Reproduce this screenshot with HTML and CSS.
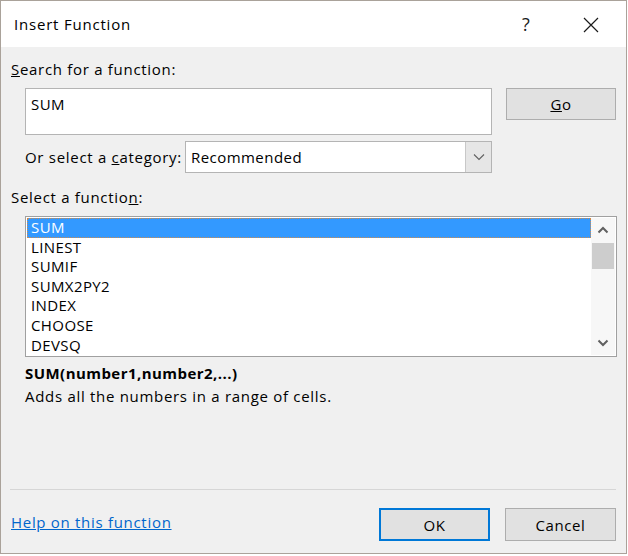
FILE: index.html
```html
<!DOCTYPE html>
<html>
<head>
<meta charset="utf-8">
<link rel="stylesheet" href="styles.css">
</head>
<body>
<div class="window">
  <div class="titlebar">
    <span class="title">Insert Function</span>
    <span class="help-btn">?</span>
    <span class="close-btn">
      <svg width="16" height="16" viewBox="0 0 16 16"><path d="M1 1 L15 15 M15 1 L1 15" stroke="#1a1a1a" stroke-width="1.2" fill="none"/></svg>
    </span>
  </div>
  <div class="content">
    <div class="label first"><u>S</u>earch for a function:</div>
    <div class="search-row">
      <div class="search-box">SUM</div>
      <div class="btn go"><u>G</u>o</div>
    </div>
    <div class="category-row">
      <span class="cat-label">Or select a <u>c</u>ategory:</span>
      <div class="select">
        <span class="select-text">Recommended</span>
        <span class="select-btn">
          <svg width="12" height="8" viewBox="0 0 12 8"><path d="M1 1.5 L6 6.5 L11 1.5" stroke="#606060" stroke-width="1.1" fill="none"/></svg>
        </span>
      </div>
    </div>
    <div class="label sel">Select a functio<u>n</u>:</div>
    <div class="listbox">
      <div class="items">
        <div class="item selected">SUM</div>
        <div class="item">LINEST</div>
        <div class="item">SUMIF</div>
        <div class="item">SUMX2PY2</div>
        <div class="item">INDEX</div>
        <div class="item">CHOOSE</div>
        <div class="item">DEVSQ</div>
      </div>
      <div class="scrollbar">
        <span class="arrow">
          <svg width="12" height="8" viewBox="0 0 12 8"><path d="M1.5 6.5 L6 2 L10.5 6.5" stroke="#606060" stroke-width="2" fill="none"/></svg>
        </span>
        <span class="thumb"></span>
        <span class="track"></span>
        <span class="arrow">
          <svg width="12" height="8" viewBox="0 0 12 8"><path d="M1.5 1.5 L6 6 L10.5 1.5" stroke="#606060" stroke-width="2" fill="none"/></svg>
        </span>
      </div>
    </div>
    <div class="syntax">SUM(number1,number2,...)</div>
    <div class="desc">Adds all the numbers in a range of cells.</div>
    <div class="separator"></div>
    <div class="footer">
      <a class="link" href="#">Help on this function</a>
      <div class="btn ok">OK</div>
      <div class="btn cancel">Cancel</div>
    </div>
  </div>
</div>
</body>
</html>
```

FILE: styles.css
```css
* { box-sizing: border-box; }
html, body { margin: 0; padding: 0; background: #ffffff; }
body {
  font-family: "Open Sans", "Noto Sans", "Liberation Sans", sans-serif;
  font-size: 15px;
  letter-spacing: 0.7px;
  color: #000;
}
.window {
  width: 627px;
  height: 554px;
  border: 1px solid #aaa29a;
  background: #f0f0f0;
  display: flex;
  flex-direction: column;
}
.titlebar {
  height: 46px;
  background: #ffffff;
  display: flex;
  align-items: center;
  padding-left: 13px;
  flex-shrink: 0;
}
.title {
  font-size: 15px;
  letter-spacing: 0.8px;
  line-height: 20px;
  flex: 1;
  margin-top: -1px;
}
.help-btn {
  font-size: 18px;
  letter-spacing: 0;
  line-height: 20px;
  width: 12px;
  margin-right: 49px;
  color: #1a1a1a;
  margin-top: -1px;
}
.close-btn {
  width: 16px;
  height: 16px;
  margin-right: 27px;
  display: flex;
  margin-top: 1px;
}
.content {
  padding: 0 10px;
  display: flex;
  flex-direction: column;
}
.label { line-height: 20px; }
.label.first { margin-top: 12px; }
.label.sel { margin-top: 14px; }
.search-row {
  display: flex;
  align-items: flex-start;
  margin-top: 9px;
  padding-left: 14px;
}
.search-box {
  width: 467px;
  height: 47px;
  background: #fff;
  border: 1px solid #b4b4b4;
  padding: 5px 5px;
  line-height: 20px;
  letter-spacing: 0.4px;
}
.btn {
  background: #e1e1e1;
  border: 1px solid #adadad;
  display: flex;
  align-items: center;
  justify-content: center;
  line-height: 20px;
  letter-spacing: 0.6px;
}
.go {
  width: 110px;
  height: 32px;
  margin-left: auto;
}
.category-row {
  display: flex;
  align-items: center;
  margin-top: 6px;
  padding-left: 14px;
  height: 32px;
}
.cat-label { line-height: 20px; width: 160px; white-space: nowrap; }
.select {
  width: 307px;
  height: 32px;
  background: #fff;
  border: 1px solid #b4b4b4;
  display: flex;
  align-items: stretch;
}
.select-text {
  flex: 1;
  padding-left: 5px;
  line-height: 30px;
  letter-spacing: 0.45px;
}
.select-btn {
  width: 26px;
  background: #e6e6e6;
  border-left: 1px solid #c8c8c8;
  display: flex;
  align-items: center;
  justify-content: center;
}
.listbox {
  margin-top: 9px;
  margin-left: 14px;
  width: 592px;
  height: 141px;
  background: #fff;
  border: 1px solid #a0a0a0;
  display: flex;
  padding: 1px;
}
.items { flex: 1; }
.item {
  line-height: 19.6px;
  height: 19.6px;
  padding-left: 4px;
  letter-spacing: 0.4px;
}
.item.selected {
  background: #3399ff;
  color: #fff;
  outline: 1px dotted #d08a4a;
  outline-offset: -1px;
}
.scrollbar {
  width: 24px;
  background: #f7f7f7;
  display: flex;
  flex-direction: column;
  align-items: center;
}
.arrow {
  height: 24px;
  display: flex;
  align-items: center;
  justify-content: center;
}
.thumb {
  width: 22px;
  height: 26px;
  background: #cdcdcd;
  margin-top: 1px;
}
.track { flex: 1; }
.syntax {
  font-weight: bold;
  letter-spacing: 0.45px;
  margin-top: 6px;
  margin-left: 14px;
  line-height: 20px;
}
.desc {
  margin-top: 3px;
  margin-left: 14px;
  line-height: 20px;
}
.separator {
  margin-top: 83px;
  margin-left: -1px;
  height: 1px;
  background: #d6d6d6;
}
.footer {
  display: flex;
  align-items: flex-start;
  margin-top: 18px;
}
.link {
  color: #0066cc;
  text-decoration: underline;
  line-height: 20px;
  margin-top: 4px;
  flex: 1;
}
.ok {
  width: 111px;
  height: 33px;
  border: 2px solid #0078d7;
}
.cancel {
  width: 111px;
  height: 33px;
  margin-left: 15px;
}
```
